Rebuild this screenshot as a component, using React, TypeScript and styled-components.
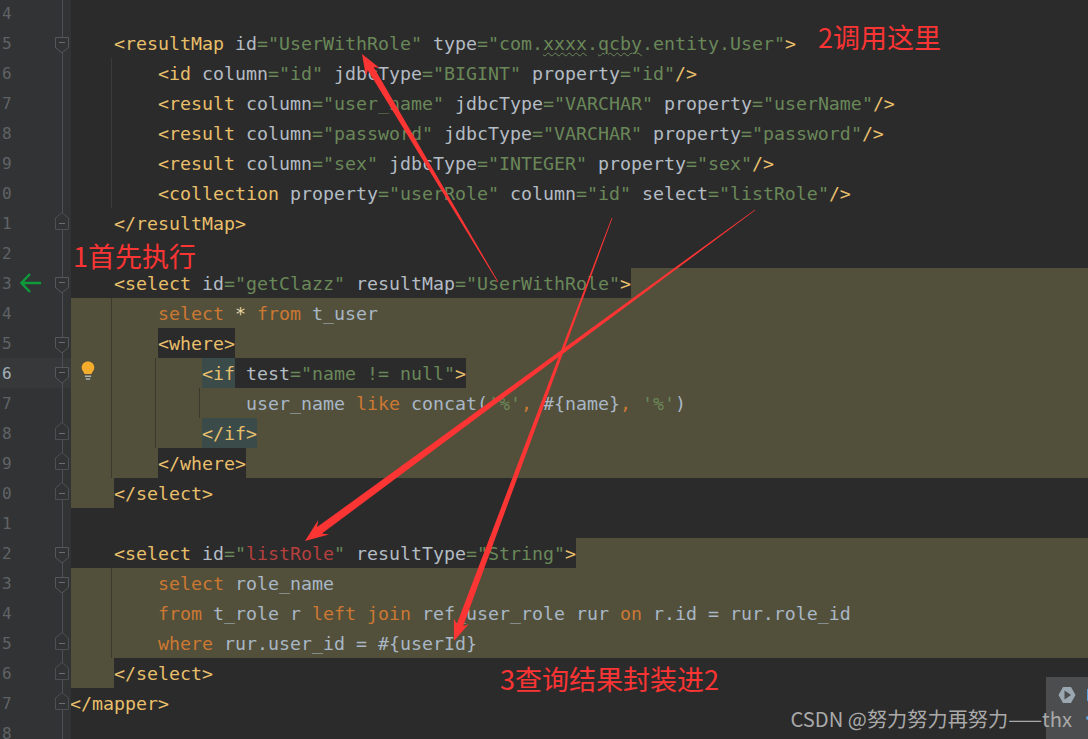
import React from "react";
import styled, { createGlobalStyle } from "styled-components";

const GlobalStyle = createGlobalStyle`
  html, body {
    margin: 0;
    padding: 0;
    height: 100%;
    overflow: hidden;
    background: #2b2b2b;
  }
`;

const GUTTER = "#313335";
const HL = "#52503a";

type Point = [number, number];

// tapered annotation arrow: nothing at the tail, swept head at the tip
const arrowPoints = (tail: Point, tip: Point, head: number, wing: number, neck: number, shaft: number) => {
    const dx = tip[0] - tail[0];
    const dy = tip[1] - tail[1];
    const len = Math.hypot(dx, dy);
    const ux = dx / len;
    const uy = dy / len;
    const at = (back: number, side: number): string =>
        `${(tip[0] - ux * back - uy * side).toFixed(1)},${(tip[1] - uy * back + ux * side).toFixed(1)}`;
    return [
        at(len, 0.4),
        at(neck, shaft),
        at(head, wing),
        at(0, 0),
        at(head, -wing),
        at(neck, -shaft),
        at(len, -0.4),
    ].join(" ");
};

const FoldMark = ({dir}: { dir: "down" | "up" }) => (
    <FoldSvg viewBox="0 0 14 30">
        {dir === "down" ? (
            <>
                <path d="M0.5 9.5H13.5V19.5L7 25L0.5 19.5Z" fill={GUTTER} stroke="#55585a"/>
                <path d="M4 14.5H10" stroke="#6a6d70"/>
            </>
        ) : (
            <>
                <path d="M7 4.5L13.5 10V21.5H0.5V10Z" fill={GUTTER} stroke="#4d5052"/>
                <path d="M4 15.5H10" stroke="#6a6d70"/>
            </>
        )}
    </FoldSvg>
);

type LineProps = {
    no: number;
    fold?: "down" | "up";
    current?: boolean;
    run?: boolean;
    hl?: boolean;
    guides?: number[];
    children?: React.ReactNode;
};

const Line = ({no, fold, current, run, hl, guides = [], children}: LineProps) => (
    <Row>
        <Gutter $current={current}>
            <LineNo $current={current}>{no % 10}</LineNo>
            <RunSlot>
                {run && (
                    <svg width="22" height="30" viewBox="0 0 22 30">
                        <path d="M1.5 15H21M10 6L1.5 15L10 24" fill="none" stroke="#0e9b3c" strokeWidth="2.4"/>
                    </svg>
                )}
            </RunSlot>
            <FoldSlot>{fold && <FoldMark dir={fold}/>}</FoldSlot>
        </Gutter>
        <Code $hl={hl} $guides={guides}>{children}</Code>
    </Row>
);

const Open = ({name}: { name: string }) => <Tag>&lt;{name}</Tag>;
const Pair = ({name, value}: { name: string; value: string }) => (
    <>
        <Attr> {name}</Attr>
        <Val>="{value}"</Val>
    </>
);

export default function App() {
    return (
        <Page>
            <GlobalStyle/>
            <Editor>
                <Line no={4}/>
                <Line no={5} fold="down">
                    {"    "}<Open name="resultMap"/><Pair name="id" value="UserWithRole"/>
                    <Attr> type</Attr>
                    <Val>="com.<Typo>xxxx</Typo>.<Typo>qcby</Typo>.entity.User"</Val>
                    <Tag>&gt;</Tag>
                </Line>
                <Line no={6} guides={[41]}>
                    {"        "}<Open name="id"/><Pair name="column" value="id"/><Pair name="jdbcType" value="BIGINT"/>
                    <Pair name="property" value="id"/><Tag>/&gt;</Tag>
                </Line>
                <Line no={7} guides={[41]}>
                    {"        "}<Open name="result"/><Pair name="column" value="user_name"/>
                    <Pair name="jdbcType" value="VARCHAR"/><Pair name="property" value="userName"/><Tag>/&gt;</Tag>
                </Line>
                <Line no={8} guides={[41]}>
                    {"        "}<Open name="result"/><Pair name="column" value="password"/>
                    <Pair name="jdbcType" value="VARCHAR"/><Pair name="property" value="password"/><Tag>/&gt;</Tag>
                </Line>
                <Line no={9} guides={[41]}>
                    {"        "}<Open name="result"/><Pair name="column" value="sex"/>
                    <Pair name="jdbcType" value="INTEGER"/><Pair name="property" value="sex"/><Tag>/&gt;</Tag>
                </Line>
                <Line no={10} guides={[41]}>
                    {"        "}<Open name="collection"/><Pair name="property" value="userRole"/>
                    <Pair name="column" value="id"/><Pair name="select" value="listRole"/><Tag>/&gt;</Tag>
                </Line>
                <Line no={11} fold="up">
                    {"    "}<Tag>&lt;/resultMap&gt;</Tag>
                </Line>
                <Line no={12}/>
                <Line no={13} fold="down" run hl>
                    <Run $tone="dark">
                        {"    "}<Open name="select"/><Pair name="id" value="getClazz"/>
                        <Pair name="resultMap" value="UserWithRole"/><Tag>&gt;</Tag>
                    </Run>
                </Line>
                <Line no={14} hl guides={[41]}>
                    {"        "}<Kw>select</Kw> <Star>*</Star> <Kw>from</Kw> <Plain>t_user</Plain>
                </Line>
                <Line no={15} fold="down" hl guides={[41]}>
                    {"        "}<Run $tone="dark"><Tag>&lt;where&gt;</Tag></Run>
                </Line>
                <Line no={16} fold="down" current hl guides={[41, 85]}>
                    <Bulb viewBox="0 0 14 20">
                        <path d="M7 0.5C3.4 0.5 0.7 3.1 0.7 6.5C0.7 9.4 2.8 10.6 3.6 13H10.4C11.2 10.6 13.3 9.4 13.3 6.5C13.3 3.1 10.6 0.5 7 0.5Z" fill="#f4ac2c"/>
                        <path d="M3.8 14.5H10.2V16H3.8ZM4.8 17.2H9.2V18.8H4.8Z" fill="#afb1b3"/>
                    </Bulb>
                    {"            "}
                    <Run $tone="teal"><Tag>&lt;if</Tag></Run>
                    <Run $tone="dark"><Pair name="test" value="name != null"/><Tag>&gt;</Tag></Run>
                </Line>
                <Line no={17} hl guides={[41, 85, 129]}>
                    {"                "}<Plain>user_name</Plain> <Kw>like</Kw> <Plain>concat(</Plain>
                    <Val>'%'</Val><Kw>, </Kw><Plain>#{"{"}name{"}"}</Plain><Kw>, </Kw><Val>'%'</Val><Plain>)</Plain>
                </Line>
                <Line no={18} fold="up" hl guides={[41, 85]}>
                    {"            "}<Run $tone="teal"><Tag>&lt;/if&gt;</Tag></Run>
                </Line>
                <Line no={19} fold="up" hl guides={[41]}>
                    {"        "}<Run $tone="dark"><Tag>&lt;/where&gt;</Tag></Run>
                </Line>
                <Line no={20} fold="up">
                    <Run $tone="hl">{"    "}</Run><Tag>&lt;/select&gt;</Tag>
                </Line>
                <Line no={21}/>
                <Line no={22} fold="down" hl>
                    <Run $tone="dark">
                        {"    "}<Open name="select"/><Attr> id</Attr>
                        <Val>="</Val><Err>listRole</Err><Val>"</Val>
                        <Pair name="resultType" value="String"/><Tag>&gt;</Tag>
                    </Run>
                </Line>
                <Line no={23} fold="down" hl guides={[41]}>
                    {"        "}<Kw>select</Kw> <Plain>role_name</Plain>
                </Line>
                <Line no={24} hl guides={[41]}>
                    {"        "}<Kw>from</Kw> <Plain>t_role r</Plain> <Kw>left join</Kw>{" "}
                    <Plain>ref_user_role rur</Plain> <Kw>on</Kw> <Plain>r.id = rur.role_id</Plain>
                </Line>
                <Line no={25} fold="up" hl guides={[41]}>
                    {"        "}<Kw>where</Kw> <Plain>rur.user_id = #{"{"}userId{"}"}</Plain>
                </Line>
                <Line no={26} fold="up">
                    <Run $tone="hl">{"    "}</Run><Tag>&lt;/select&gt;</Tag>
                </Line>
                <Line no={27} fold="up">
                    <Tag>&lt;/mapper&gt;</Tag>
                </Line>
                <Line no={28}/>
            </Editor>

            <Arrows viewBox="0 0 1088 739">
                <polygon points={arrowPoints([498, 282], [362, 54], 21, 8, 17, 3.4)}/>
                <polygon points={arrowPoints([612, 218], [454, 641], 21, 8, 17, 3.4)}/>
                <polygon points={arrowPoints([755, 210], [305, 541], 23, 9, 18, 4)}/>
            </Arrows>

            <Note $left={73} $top={242}>1首先执行</Note>
            <Note $left={818} $top={23}>2调用这里</Note>
            <Note $left={500} $top={665}>3查询结果封装进2</Note>

            <SidePanel>
                <svg width="18" height="18" viewBox="0 0 18 18">
                    <path d="M5 1H13L17.5 9L13 17H5L0.5 9Z" fill="#9aa7b0"/>
                    <path d="M6.5 4.5L13 9L6.5 13.5Z" fill="#4b4d4f"/>
                </svg>
                <PanelTick/>
                <PanelDot/>
            </SidePanel>
            <Watermark>CSDN @努力努力再努力——thx</Watermark>
        </Page>
    );
}

const Page = styled.div`
  width: 100vw;
  height: 100vh;
  position: relative;
  overflow: hidden;
  background-color: #2b2b2b;
`;
const Editor = styled.div`
  display: flex;
  flex-direction: column;
  margin-top: -2px;
  font-family: "DejaVu Sans Mono", "Liberation Mono", monospace;
  font-size: 18.27px;
  line-height: 32px;
`;
const Row = styled.div`
  height: 30px;
  flex: none;
  display: flex;
  flex-direction: row;
`;
const Gutter = styled.div<{ $current?: boolean }>`
  width: 71px;
  flex: none;
  display: flex;
  flex-direction: row;
  box-sizing: border-box;
  padding-left: 2px;
  position: relative;
  z-index: 1;
  background-color: ${p => (p.$current ? "#36383a" : GUTTER)};
  background-image: linear-gradient(#4d5052, #4d5052);
  background-size: 1px 100%;
  background-position: 62px 0;
  background-repeat: no-repeat;
`;
const LineNo = styled.div<{ $current?: boolean }>`
  width: 18px;
  font-size: 16px;
  color: ${p => (p.$current ? "#a4b0bc" : "#606366")};
`;
const RunSlot = styled.div`
  width: 22px;
  height: 30px;
`;
const FoldSlot = styled.div`
  width: 14px;
  height: 30px;
  margin-left: 13px;
`;
const FoldSvg = styled.svg`
  display: block;
  width: 14px;
  height: 30px;
`;
const Code = styled.div<{ $hl?: boolean; $guides: number[] }>`
  flex: 1;
  margin-left: -1px;
  position: relative;
  white-space: pre;
  background-color: ${p => (p.$hl ? HL : "#2b2b2b")};
  background-image: ${p => {
    const color = p.$hl ? "#3a3a2c" : "#3b3b3b";
    return p.$guides.length ? p.$guides.map(() => `linear-gradient(${color}, ${color})`).join(", ") : "none";
  }};
  background-size: 1px 100%;
  background-position: ${p => p.$guides.map(x => `${x}px 0`).join(", ") || "0 0"};
  background-repeat: no-repeat;
`;
const Run = styled.span<{ $tone: "dark" | "teal" | "hl" }>`
  display: inline-block;
  height: 30px;
  background-color: ${p => ({dark: "#2b2b2b", teal: "#3a4b4a", hl: HL}[p.$tone])};
`;
const Tag = styled.span`
  color: #e8bf6a;
`;
const Attr = styled.span`
  color: #b4bcc4;
`;
const Val = styled.span`
  color: #6a8759;
`;
const Typo = styled.span`
  text-decoration: underline wavy #6a8759 1px;
  text-underline-offset: 2px;
`;
const Err = styled.span`
  color: #b5403e;
`;
const Kw = styled.span`
  color: #cc7832;
`;
const Star = styled.span`
  color: #e6d6a6;
`;
const Plain = styled.span`
  color: #a9b7c6;
`;
const Bulb = styled.svg`
  position: absolute;
  left: 11px;
  top: 3px;
  width: 14px;
  height: 20px;
`;
const Arrows = styled.svg`
  position: absolute;
  inset: 0;
  width: 1088px;
  height: 739px;
  fill: #fb3434;
  pointer-events: none;
`;
const Note = styled.div<{ $left: number; $top: number }>`
  position: absolute;
  left: ${p => p.$left}px;
  top: ${p => p.$top}px;
  font-family: "Noto Sans CJK SC", "Noto Sans", sans-serif;
  font-size: 27px;
  line-height: 27px;
  color: #fb3434;
  white-space: nowrap;
`;
const SidePanel = styled.div`
  position: absolute;
  right: 0;
  bottom: 0;
  width: 42px;
  height: 62px;
  box-sizing: border-box;
  padding: 9px 0 0 12px;
  background-color: #4b4d4f;
`;
const PanelTick = styled.div`
  position: absolute;
  right: 0;
  top: 12px;
  width: 1px;
  height: 12px;
  background-color: #5c9fd8;
`;
const PanelDot = styled.div`
  position: absolute;
  right: -2px;
  top: 39px;
  width: 4px;
  height: 4px;
  border-radius: 50%;
  background-color: #5c9fd8;
`;
const Watermark = styled.div`
  position: absolute;
  right: 16px;
  top: 705px;
  font-family: "Noto Sans CJK SC", "Noto Sans", sans-serif;
  font-size: 20.2px;
  line-height: 28px;
  color: #a9a9a9;
  white-space: nowrap;
`;
